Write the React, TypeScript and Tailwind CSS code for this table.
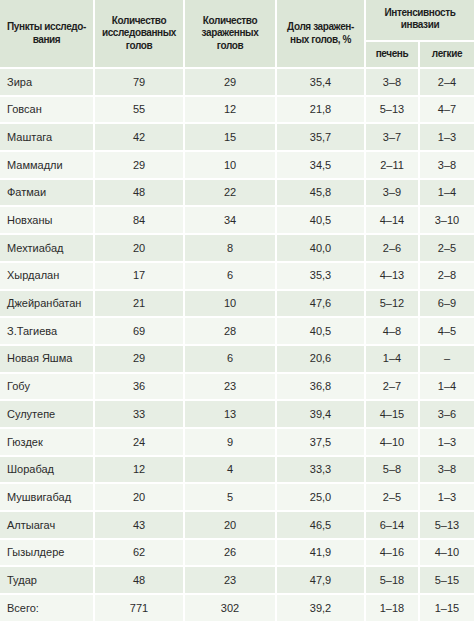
import React from "react";

const rows: [string, string, string, string, string, string][] = [
  ["Зира", "79", "29", "35,4", "3–8", "2–4"],
  ["Говсан", "55", "12", "21,8", "5–13", "4–7"],
  ["Маштага", "42", "15", "35,7", "3–7", "1–3"],
  ["Маммадли", "29", "10", "34,5", "2–11", "3–8"],
  ["Фатмаи", "48", "22", "45,8", "3–9", "1–4"],
  ["Новханы", "84", "34", "40,5", "4–14", "3–10"],
  ["Мехтиабад", "20", "8", "40,0", "2–6", "2–5"],
  ["Хырдалан", "17", "6", "35,3", "4–13", "2–8"],
  ["Джейранбатан", "21", "10", "47,6", "5–12", "6–9"],
  ["З.Тагиева", "69", "28", "40,5", "4–8", "4–5"],
  ["Новая Яшма", "29", "6", "20,6", "1–4", "–"],
  ["Гобу", "36", "23", "36,8", "2–7", "1–4"],
  ["Сулутепе", "33", "13", "39,4", "4–15", "3–6"],
  ["Гюздек", "24", "9", "37,5", "4–10", "1–3"],
  ["Шорабад", "12", "4", "33,3", "5–8", "3–8"],
  ["Мушвигабад", "20", "5", "25,0", "2–5", "1–3"],
  ["Алтыагач", "43", "20", "46,5", "6–14", "5–13"],
  ["Гызылдере", "62", "26", "41,9", "4–16", "4–10"],
  ["Тудар", "48", "23", "47,9", "5–18", "5–15"],
  ["Всего:", "771", "302", "39,2", "1–18", "1–15"],
];

const hd =
  "bg-[#dce6d7] flex items-center justify-center text-center font-bold text-[10px] leading-[12.5px] tracking-[-0.4px] text-[#1e1e1e]";

export default function App() {
  return (
    <div
      className="w-[474px] h-[622px] bg-white overflow-hidden"
      style={{ fontFamily: '"Liberation Sans", Arial, sans-serif' }}
    >
      <div className="grid grid-cols-[93px_88px_90px_87px_52px_54px] grid-rows-[40px_25px] gap-[2px]">
        <div className={`${hd} row-span-2`}>
          Пункты исследо-
          <br />
          вания
        </div>
        <div className={`${hd} row-span-2`}>
          Количество
          <br />
          исследованных
          <br />
          голов
        </div>
        <div className={`${hd} row-span-2`}>
          Количество
          <br />
          зараженных
          <br />
          голов
        </div>
        <div className={`${hd} row-span-2`}>
          Доля заражен-
          <br />
          ных голов, %
        </div>
        <div className={`${hd} col-span-2 pb-[2px]`}>
          Интенсивность
          <br />
          инвазии
        </div>
        <div className={hd}>печень</div>
        <div className={hd}>легкие</div>
      </div>
      <div className="mt-[2px] grid grid-cols-[93px_88px_90px_87px_52px_54px] auto-rows-[25.7px] gap-[2px] text-[11px] text-[#2b2b2b]">
        {rows.map((r, i) => {
          const bg = i % 2 === 0 ? "bg-[#e7eee4]" : "bg-[#f3f7f1]";
          return (
            <React.Fragment key={i}>
              <div className={`${bg} flex items-center pl-[7px]`}>{r[0]}</div>
              {r.slice(1).map((c, j) => (
                <div key={j} className={`${bg} flex items-center justify-center`}>
                  {c}
                </div>
              ))}
            </React.Fragment>
          );
        })}
      </div>
    </div>
  );
}
